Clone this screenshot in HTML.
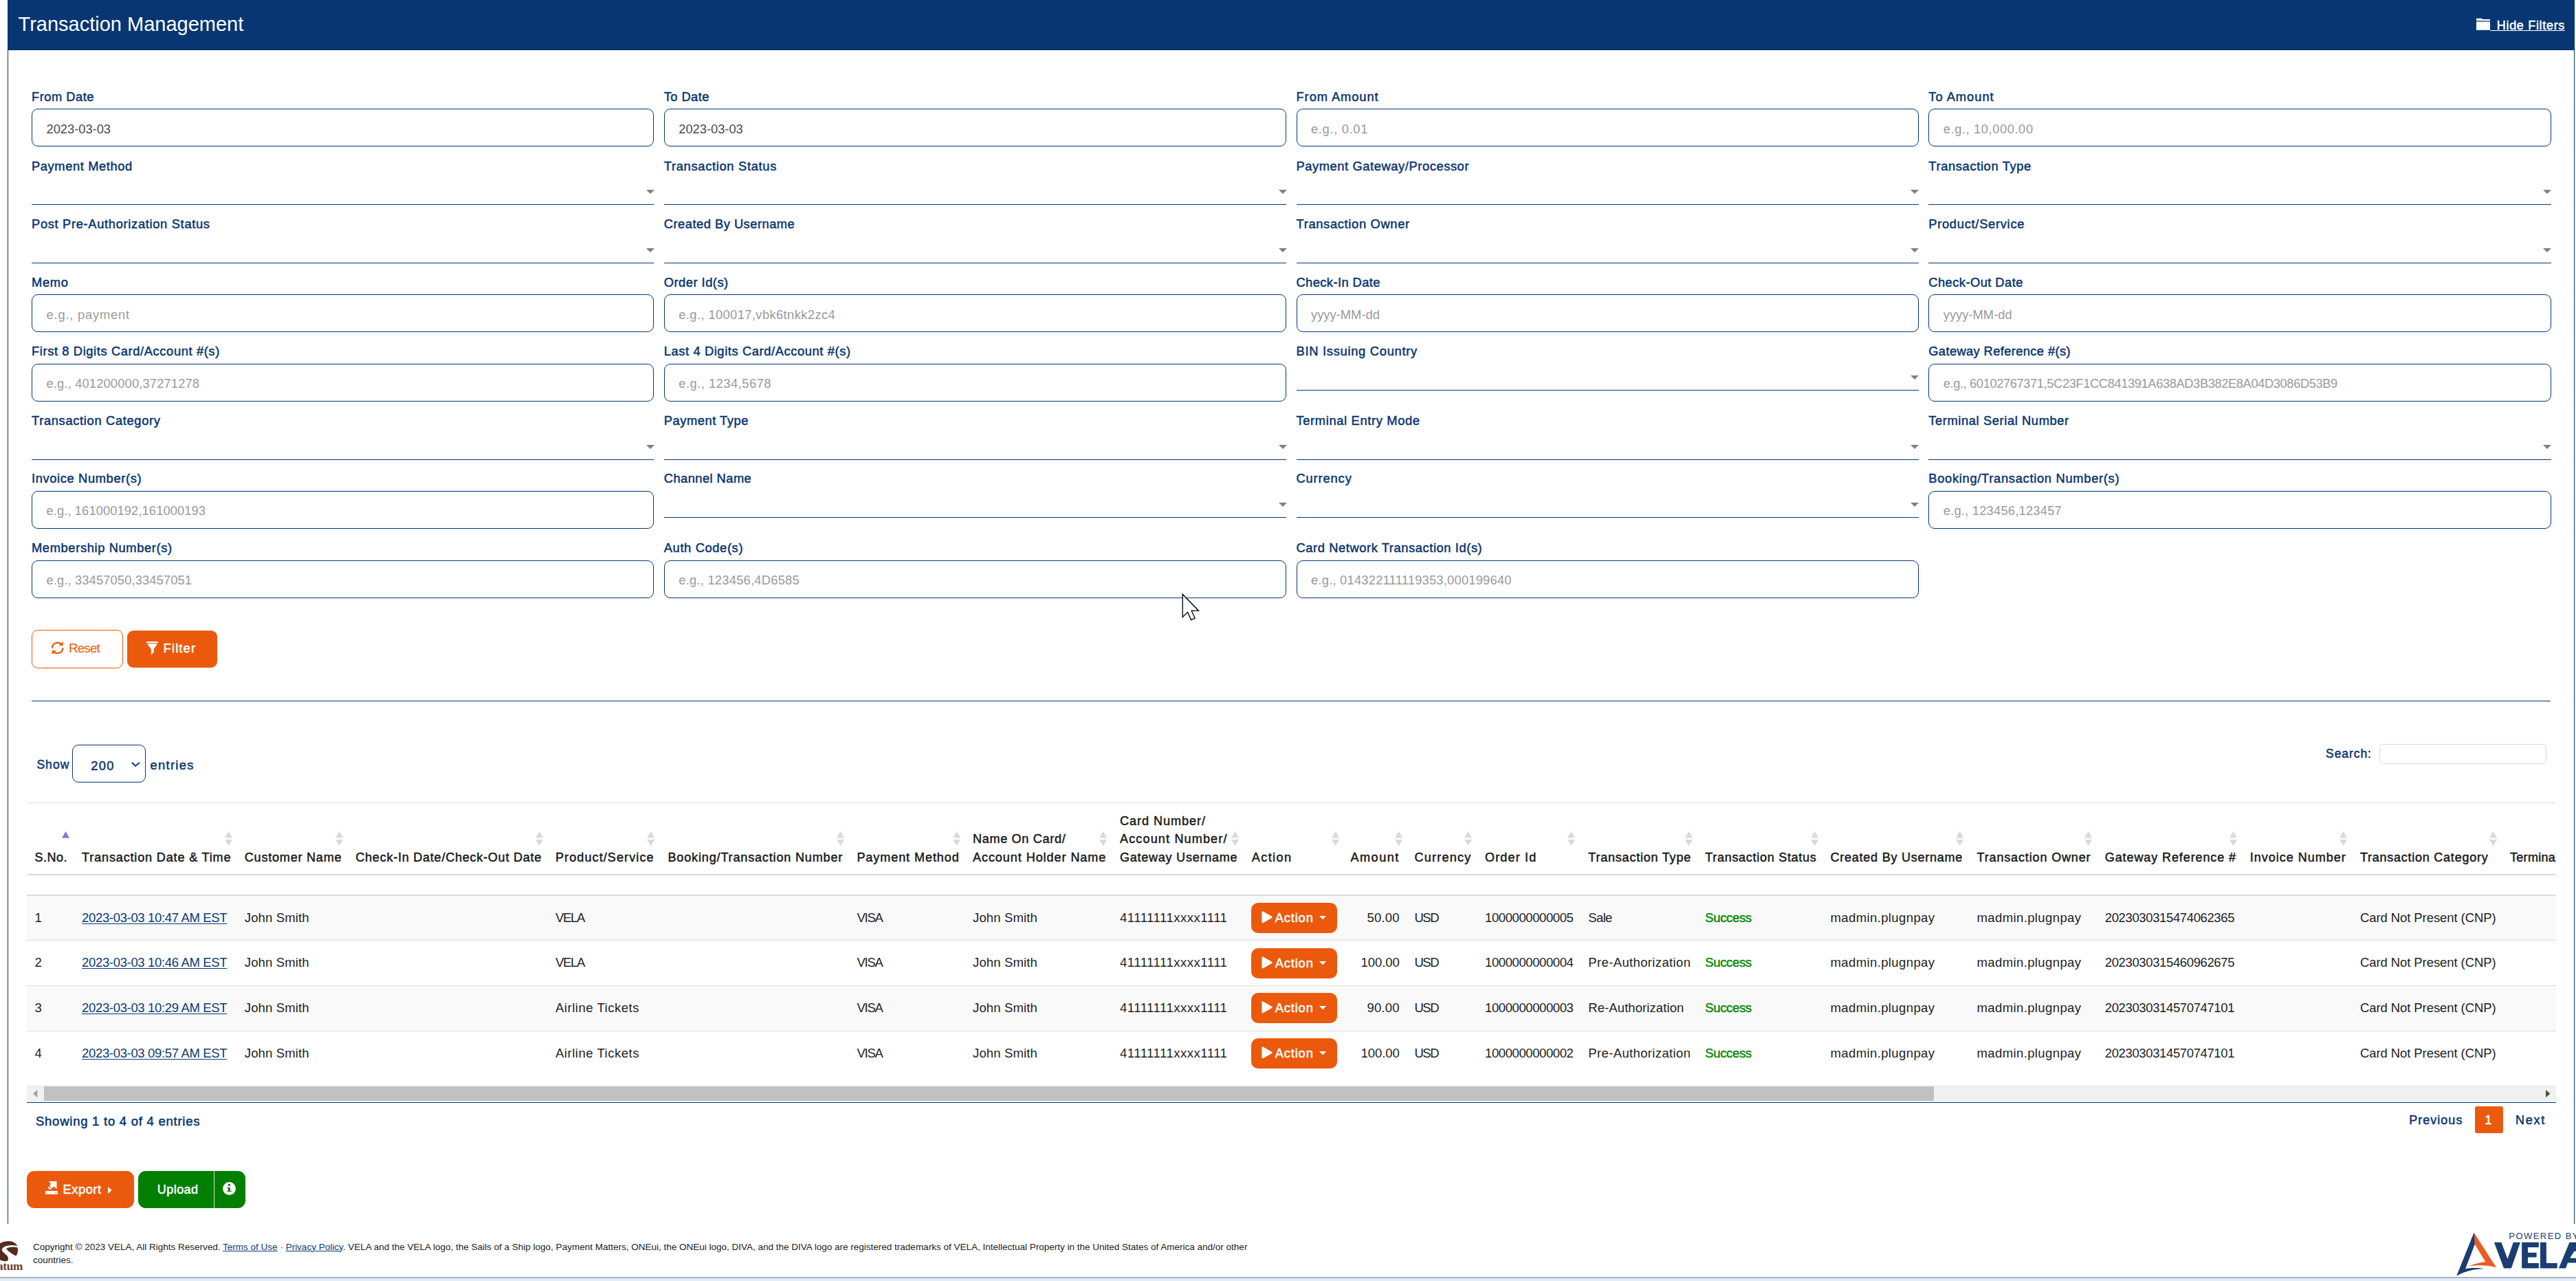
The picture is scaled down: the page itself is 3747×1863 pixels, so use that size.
<!DOCTYPE html>
<html><head><meta charset="utf-8"><title>Transaction Management</title>
<style>
html,body{margin:0;padding:0;}
body{width:3747px;height:1863px;position:relative;overflow:hidden;background:#fff;font-family:"Liberation Sans", sans-serif;}
.a{position:absolute;display:block;}
.t{position:absolute;white-space:nowrap;font-family:"Liberation Sans", sans-serif;}
svg{overflow:visible}
</style></head><body>
<div class="a" style="left:11px;top:0px;width:3734px;height:73px;background:#073673"></div>
<div class="a" style="left:11px;top:72px;width:3734px;height:1px;background:#02295f"></div>
<div class="t" style="left:26.5px;top:21px;font-size:29px;line-height:29px;font-weight:normal;color:#ffffff;">Transaction Management</div>
<svg class="a" style="left:3602px;top:26px" width="21" height="18" viewBox="0 0 21 18"><path d="M0 0.8 H8 L9 2 H20 V4.2 H0 Z M0 5.4 H20 V17.8 H0 Z" fill="#fff"/></svg>
<div class="t" style="right:16px;top:28px;font-size:18px;line-height:18px;font-weight:normal;color:#ffffff;letter-spacing:0.679px;-webkit-text-stroke:0.5px #ffffff;">Hide Filters</div>
<div class="a" style="left:3621.7px;top:44px;width:109.3px;height:1.2px;background:#fff"></div>
<div class="a" style="left:11px;top:73px;width:1px;height:1707px;background:#073672"></div>
<div class="a" style="left:3744.4px;top:73px;width:1px;height:1707px;background:#073672"></div>
<div class="t" style="left:46px;top:132px;font-size:18.3px;line-height:18.3px;font-weight:normal;color:#0a3670;letter-spacing:0.508px;-webkit-text-stroke:0.5px #0a3670;">From Date</div>
<div class="a" style="left:46px;top:158.3px;width:905.25px;height:55px;border:1px solid #073672;border-radius:9px;box-sizing:border-box;background:#fff"></div>
<div class="t" style="left:67.5px;top:178.8px;font-size:18.3px;line-height:18.3px;font-weight:normal;color:#4a4a4a;letter-spacing:-0.002px;">2023-03-03</div>
<div class="t" style="left:965.75px;top:132px;font-size:18.3px;line-height:18.3px;font-weight:normal;color:#0a3670;letter-spacing:0.445px;-webkit-text-stroke:0.5px #0a3670;">To Date</div>
<div class="a" style="left:965.75px;top:158.3px;width:905.25px;height:55px;border:1px solid #073672;border-radius:9px;box-sizing:border-box;background:#fff"></div>
<div class="t" style="left:987.25px;top:178.8px;font-size:18.3px;line-height:18.3px;font-weight:normal;color:#4a4a4a;letter-spacing:-0.002px;">2023-03-03</div>
<div class="t" style="left:1885.5px;top:132px;font-size:18.3px;line-height:18.3px;font-weight:normal;color:#0a3670;letter-spacing:0.942px;-webkit-text-stroke:0.5px #0a3670;">From Amount</div>
<div class="a" style="left:1885.5px;top:158.3px;width:905.25px;height:55px;border:1px solid #073672;border-radius:9px;box-sizing:border-box;background:#fff"></div>
<div class="t" style="left:1907px;top:178.8px;font-size:18.3px;line-height:18.3px;font-weight:normal;color:#9a9a9a;letter-spacing:0.674px;">e.g., 0.01</div>
<div class="t" style="left:2805.25px;top:132px;font-size:18.3px;line-height:18.3px;font-weight:normal;color:#0a3670;letter-spacing:1.006px;-webkit-text-stroke:0.5px #0a3670;">To Amount</div>
<div class="a" style="left:2805.25px;top:158.3px;width:905.25px;height:55px;border:1px solid #073672;border-radius:9px;box-sizing:border-box;background:#fff"></div>
<div class="t" style="left:2826.75px;top:178.8px;font-size:18.3px;line-height:18.3px;font-weight:normal;color:#9a9a9a;letter-spacing:0.594px;">e.g., 10,000.00</div>
<div class="t" style="left:46px;top:232.5px;font-size:18.3px;line-height:18.3px;font-weight:normal;color:#0a3670;letter-spacing:0.621px;-webkit-text-stroke:0.5px #0a3670;">Payment Method</div>
<div class="a" style="left:46px;top:297px;width:905.25px;height:1px;background:#073672"></div>
<svg class="a" style="left:939.75px;top:276px" width="12" height="6" viewBox="0 0 12 6"><path d="M0 0 H12 L6 6 Z" fill="#808080"/></svg>
<div class="t" style="left:965.75px;top:232.5px;font-size:18.3px;line-height:18.3px;font-weight:normal;color:#0a3670;letter-spacing:0.695px;-webkit-text-stroke:0.5px #0a3670;">Transaction Status</div>
<div class="a" style="left:965.75px;top:297px;width:905.25px;height:1px;background:#073672"></div>
<svg class="a" style="left:1859.5px;top:276px" width="12" height="6" viewBox="0 0 12 6"><path d="M0 0 H12 L6 6 Z" fill="#808080"/></svg>
<div class="t" style="left:1885.5px;top:232.5px;font-size:18.3px;line-height:18.3px;font-weight:normal;color:#0a3670;letter-spacing:0.593px;-webkit-text-stroke:0.5px #0a3670;">Payment Gateway/Processor</div>
<div class="a" style="left:1885.5px;top:297px;width:905.25px;height:1px;background:#073672"></div>
<svg class="a" style="left:2779.25px;top:276px" width="12" height="6" viewBox="0 0 12 6"><path d="M0 0 H12 L6 6 Z" fill="#808080"/></svg>
<div class="t" style="left:2805.25px;top:232.5px;font-size:18.3px;line-height:18.3px;font-weight:normal;color:#0a3670;letter-spacing:0.652px;-webkit-text-stroke:0.5px #0a3670;">Transaction Type</div>
<div class="a" style="left:2805.25px;top:297px;width:905.25px;height:1px;background:#073672"></div>
<svg class="a" style="left:3699px;top:276px" width="12" height="6" viewBox="0 0 12 6"><path d="M0 0 H12 L6 6 Z" fill="#808080"/></svg>
<div class="t" style="left:46px;top:317.3px;font-size:18.3px;line-height:18.3px;font-weight:normal;color:#0a3670;letter-spacing:0.685px;-webkit-text-stroke:0.5px #0a3670;">Post Pre-Authorization Status</div>
<div class="a" style="left:46px;top:382px;width:905.25px;height:1px;background:#073672"></div>
<svg class="a" style="left:939.75px;top:361px" width="12" height="6" viewBox="0 0 12 6"><path d="M0 0 H12 L6 6 Z" fill="#808080"/></svg>
<div class="t" style="left:965.75px;top:317.3px;font-size:18.3px;line-height:18.3px;font-weight:normal;color:#0a3670;letter-spacing:0.509px;-webkit-text-stroke:0.5px #0a3670;">Created By Username</div>
<div class="a" style="left:965.75px;top:382px;width:905.25px;height:1px;background:#073672"></div>
<svg class="a" style="left:1859.5px;top:361px" width="12" height="6" viewBox="0 0 12 6"><path d="M0 0 H12 L6 6 Z" fill="#808080"/></svg>
<div class="t" style="left:1885.5px;top:317.3px;font-size:18.3px;line-height:18.3px;font-weight:normal;color:#0a3670;letter-spacing:0.676px;-webkit-text-stroke:0.5px #0a3670;">Transaction Owner</div>
<div class="a" style="left:1885.5px;top:382px;width:905.25px;height:1px;background:#073672"></div>
<svg class="a" style="left:2779.25px;top:361px" width="12" height="6" viewBox="0 0 12 6"><path d="M0 0 H12 L6 6 Z" fill="#808080"/></svg>
<div class="t" style="left:2805.25px;top:317.3px;font-size:18.3px;line-height:18.3px;font-weight:normal;color:#0a3670;letter-spacing:0.725px;-webkit-text-stroke:0.5px #0a3670;">Product/Service</div>
<div class="a" style="left:2805.25px;top:382px;width:905.25px;height:1px;background:#073672"></div>
<svg class="a" style="left:3699px;top:361px" width="12" height="6" viewBox="0 0 12 6"><path d="M0 0 H12 L6 6 Z" fill="#808080"/></svg>
<div class="t" style="left:46px;top:402.1px;font-size:18.3px;line-height:18.3px;font-weight:normal;color:#0a3670;letter-spacing:0.677px;-webkit-text-stroke:0.5px #0a3670;">Memo</div>
<div class="a" style="left:46px;top:428.3px;width:905.25px;height:55px;border:1px solid #073672;border-radius:9px;box-sizing:border-box;background:#fff"></div>
<div class="t" style="left:67.5px;top:448.8px;font-size:18.3px;line-height:18.3px;font-weight:normal;color:#9a9a9a;letter-spacing:0.827px;">e.g., payment</div>
<div class="t" style="left:965.75px;top:402.1px;font-size:18.3px;line-height:18.3px;font-weight:normal;color:#0a3670;letter-spacing:0.508px;-webkit-text-stroke:0.5px #0a3670;">Order Id(s)</div>
<div class="a" style="left:965.75px;top:428.3px;width:905.25px;height:55px;border:1px solid #073672;border-radius:9px;box-sizing:border-box;background:#fff"></div>
<div class="t" style="left:987.25px;top:448.8px;font-size:18.3px;line-height:18.3px;font-weight:normal;color:#9a9a9a;letter-spacing:0.413px;">e.g., 100017,vbk6tnkk2zc4</div>
<div class="t" style="left:1885.5px;top:402.1px;font-size:18.3px;line-height:18.3px;font-weight:normal;color:#0a3670;letter-spacing:0.422px;-webkit-text-stroke:0.5px #0a3670;">Check-In Date</div>
<div class="a" style="left:1885.5px;top:428.3px;width:905.25px;height:55px;border:1px solid #073672;border-radius:9px;box-sizing:border-box;background:#fff"></div>
<div class="t" style="left:1907px;top:448.8px;font-size:18.3px;line-height:18.3px;font-weight:normal;color:#9a9a9a;letter-spacing:0.041px;">yyyy-MM-dd</div>
<div class="t" style="left:2805.25px;top:402.1px;font-size:18.3px;line-height:18.3px;font-weight:normal;color:#0a3670;letter-spacing:0.466px;-webkit-text-stroke:0.5px #0a3670;">Check-Out Date</div>
<div class="a" style="left:2805.25px;top:428.3px;width:905.25px;height:55px;border:1px solid #073672;border-radius:9px;box-sizing:border-box;background:#fff"></div>
<div class="t" style="left:2826.75px;top:448.8px;font-size:18.3px;line-height:18.3px;font-weight:normal;color:#9a9a9a;letter-spacing:0.041px;">yyyy-MM-dd</div>
<div class="t" style="left:46px;top:502px;font-size:18.3px;line-height:18.3px;font-weight:normal;color:#0a3670;letter-spacing:0.621px;-webkit-text-stroke:0.5px #0a3670;">First 8 Digits Card/Account #(s)</div>
<div class="a" style="left:46px;top:528.7px;width:905.25px;height:55px;border:1px solid #073672;border-radius:9px;box-sizing:border-box;background:#fff"></div>
<div class="t" style="left:67.5px;top:549.2px;font-size:18.3px;line-height:18.3px;font-weight:normal;color:#9a9a9a;letter-spacing:0.171px;">e.g., 401200000,37271278</div>
<div class="t" style="left:965.75px;top:502px;font-size:18.3px;line-height:18.3px;font-weight:normal;color:#0a3670;letter-spacing:0.608px;-webkit-text-stroke:0.5px #0a3670;">Last 4 Digits Card/Account #(s)</div>
<div class="a" style="left:965.75px;top:528.7px;width:905.25px;height:55px;border:1px solid #073672;border-radius:9px;box-sizing:border-box;background:#fff"></div>
<div class="t" style="left:987.25px;top:549.2px;font-size:18.3px;line-height:18.3px;font-weight:normal;color:#9a9a9a;letter-spacing:0.516px;">e.g., 1234,5678</div>
<div class="t" style="left:1885.5px;top:502px;font-size:18.3px;line-height:18.3px;font-weight:normal;color:#0a3670;letter-spacing:0.730px;-webkit-text-stroke:0.5px #0a3670;">BIN Issuing Country</div>
<div class="a" style="left:1885.5px;top:567px;width:905.25px;height:1px;background:#073672"></div>
<svg class="a" style="left:2779.25px;top:546px" width="12" height="6" viewBox="0 0 12 6"><path d="M0 0 H12 L6 6 Z" fill="#808080"/></svg>
<div class="t" style="left:2805.25px;top:502px;font-size:18.3px;line-height:18.3px;font-weight:normal;color:#0a3670;letter-spacing:0.388px;-webkit-text-stroke:0.5px #0a3670;">Gateway Reference #(s)</div>
<div class="a" style="left:2805.25px;top:528.7px;width:905.25px;height:55px;border:1px solid #073672;border-radius:9px;box-sizing:border-box;background:#fff"></div>
<div class="t" style="left:2826.75px;top:549.2px;font-size:18.3px;line-height:18.3px;font-weight:normal;color:#9a9a9a;letter-spacing:-0.388px;">e.g., 60102767371,5C23F1CC841391A638AD3B382E8A04D3086D53B9</div>
<div class="t" style="left:46px;top:603.2px;font-size:18.3px;line-height:18.3px;font-weight:normal;color:#0a3670;letter-spacing:0.676px;-webkit-text-stroke:0.5px #0a3670;">Transaction Category</div>
<div class="a" style="left:46px;top:668px;width:905.25px;height:1px;background:#073672"></div>
<svg class="a" style="left:939.75px;top:647px" width="12" height="6" viewBox="0 0 12 6"><path d="M0 0 H12 L6 6 Z" fill="#808080"/></svg>
<div class="t" style="left:965.75px;top:603.2px;font-size:18.3px;line-height:18.3px;font-weight:normal;color:#0a3670;letter-spacing:0.553px;-webkit-text-stroke:0.5px #0a3670;">Payment Type</div>
<div class="a" style="left:965.75px;top:668px;width:905.25px;height:1px;background:#073672"></div>
<svg class="a" style="left:1859.5px;top:647px" width="12" height="6" viewBox="0 0 12 6"><path d="M0 0 H12 L6 6 Z" fill="#808080"/></svg>
<div class="t" style="left:1885.5px;top:603.2px;font-size:18.3px;line-height:18.3px;font-weight:normal;color:#0a3670;letter-spacing:0.657px;-webkit-text-stroke:0.5px #0a3670;">Terminal Entry Mode</div>
<div class="a" style="left:1885.5px;top:668px;width:905.25px;height:1px;background:#073672"></div>
<svg class="a" style="left:2779.25px;top:647px" width="12" height="6" viewBox="0 0 12 6"><path d="M0 0 H12 L6 6 Z" fill="#808080"/></svg>
<div class="t" style="left:2805.25px;top:603.2px;font-size:18.3px;line-height:18.3px;font-weight:normal;color:#0a3670;letter-spacing:0.613px;-webkit-text-stroke:0.5px #0a3670;">Terminal Serial Number</div>
<div class="a" style="left:2805.25px;top:668px;width:905.25px;height:1px;background:#073672"></div>
<svg class="a" style="left:3699px;top:647px" width="12" height="6" viewBox="0 0 12 6"><path d="M0 0 H12 L6 6 Z" fill="#808080"/></svg>
<div class="t" style="left:46px;top:686.8px;font-size:18.3px;line-height:18.3px;font-weight:normal;color:#0a3670;letter-spacing:0.635px;-webkit-text-stroke:0.5px #0a3670;">Invoice Number(s)</div>
<div class="a" style="left:46px;top:713.7px;width:905.25px;height:55px;border:1px solid #073672;border-radius:9px;box-sizing:border-box;background:#fff"></div>
<div class="t" style="left:67.5px;top:734.2px;font-size:18.3px;line-height:18.3px;font-weight:normal;color:#9a9a9a;letter-spacing:0.115px;">e.g., 161000192,161000193</div>
<div class="t" style="left:965.75px;top:686.8px;font-size:18.3px;line-height:18.3px;font-weight:normal;color:#0a3670;letter-spacing:0.459px;-webkit-text-stroke:0.5px #0a3670;">Channel Name</div>
<div class="a" style="left:965.75px;top:752px;width:905.25px;height:1px;background:#073672"></div>
<svg class="a" style="left:1859.5px;top:731px" width="12" height="6" viewBox="0 0 12 6"><path d="M0 0 H12 L6 6 Z" fill="#808080"/></svg>
<div class="t" style="left:1885.5px;top:686.8px;font-size:18.3px;line-height:18.3px;font-weight:normal;color:#0a3670;letter-spacing:0.873px;-webkit-text-stroke:0.5px #0a3670;">Currency</div>
<div class="a" style="left:1885.5px;top:752px;width:905.25px;height:1px;background:#073672"></div>
<svg class="a" style="left:2779.25px;top:731px" width="12" height="6" viewBox="0 0 12 6"><path d="M0 0 H12 L6 6 Z" fill="#808080"/></svg>
<div class="t" style="left:2805.25px;top:686.8px;font-size:18.3px;line-height:18.3px;font-weight:normal;color:#0a3670;letter-spacing:0.711px;-webkit-text-stroke:0.5px #0a3670;">Booking/Transaction Number(s)</div>
<div class="a" style="left:2805.25px;top:713.7px;width:905.25px;height:55px;border:1px solid #073672;border-radius:9px;box-sizing:border-box;background:#fff"></div>
<div class="t" style="left:2826.75px;top:734.2px;font-size:18.3px;line-height:18.3px;font-weight:normal;color:#9a9a9a;letter-spacing:0.236px;">e.g., 123456,123457</div>
<div class="t" style="left:46px;top:788.4px;font-size:18.3px;line-height:18.3px;font-weight:normal;color:#0a3670;letter-spacing:0.641px;-webkit-text-stroke:0.5px #0a3670;">Membership Number(s)</div>
<div class="a" style="left:46px;top:814.7px;width:905.25px;height:55px;border:1px solid #073672;border-radius:9px;box-sizing:border-box;background:#fff"></div>
<div class="t" style="left:67.5px;top:835.2px;font-size:18.3px;line-height:18.3px;font-weight:normal;color:#9a9a9a;letter-spacing:0.141px;">e.g., 33457050,33457051</div>
<div class="t" style="left:965.75px;top:788.4px;font-size:18.3px;line-height:18.3px;font-weight:normal;color:#0a3670;letter-spacing:0.639px;-webkit-text-stroke:0.5px #0a3670;">Auth Code(s)</div>
<div class="a" style="left:965.75px;top:814.7px;width:905.25px;height:55px;border:1px solid #073672;border-radius:9px;box-sizing:border-box;background:#fff"></div>
<div class="t" style="left:987.25px;top:835.2px;font-size:18.3px;line-height:18.3px;font-weight:normal;color:#9a9a9a;letter-spacing:0.257px;">e.g., 123456,4D6585</div>
<div class="t" style="left:1885.5px;top:788.4px;font-size:18.3px;line-height:18.3px;font-weight:normal;color:#0a3670;letter-spacing:0.594px;-webkit-text-stroke:0.5px #0a3670;">Card Network Transaction Id(s)</div>
<div class="a" style="left:1885.5px;top:814.7px;width:905.25px;height:55px;border:1px solid #073672;border-radius:9px;box-sizing:border-box;background:#fff"></div>
<div class="t" style="left:1907px;top:835.2px;font-size:18.3px;line-height:18.3px;font-weight:normal;color:#9a9a9a;letter-spacing:0.240px;">e.g., 014322111119353,000199640</div>
<div class="a" style="left:46.4px;top:916.3px;width:132.4px;height:55.3px;border:1px solid #eb5a0c;border-radius:9px;box-sizing:border-box"></div>
<svg class="a" style="left:70px;top:928px" width="28" height="28" viewBox="0 0 28 28"><g fill="none" stroke="#eb5a0c" stroke-width="2.3"><path d="M5.9 14.6 A7.75 7.75 0 0 1 18.6 8.5"/><path d="M21.3 14.2 A7.75 7.75 0 0 1 8.6 20.3"/></g><path d="M21.7 5 V10.8 H15.6 Z M5.8 18 H11.9 L5.8 23.9 Z" fill="#eb5a0c"/></svg>
<div class="t" style="left:99.9px;top:933.8px;font-size:18.8px;line-height:18.8px;font-weight:normal;color:#eb5a0c;letter-spacing:-0.791px;">Reset</div>
<div class="a" style="left:185px;top:917px;width:130.7px;height:54px;background:#eb5a0c;border-radius:9px"></div>
<svg class="a" style="left:208px;top:928px" width="28" height="28" viewBox="0 0 28 28"><path d="M5 4.9 H21.9 V6.9 H5 Z M5.9 8.1 H21 L15.7 16.2 V20.5 L12.4 24 Q11.9 24.2 11.9 23.5 V16.2 Z" fill="#fff"/></svg>
<div class="t" style="left:237.5px;top:933.8px;font-size:18.5px;line-height:18.5px;font-weight:normal;color:#fff;letter-spacing:1.115px;-webkit-text-stroke:0.5px #fff;">Filter</div>
<div class="a" style="left:46px;top:1019px;width:3664px;height:1px;background:#073672"></div>
<div class="t" style="left:53.4px;top:1104.3px;font-size:17.5px;line-height:17.5px;font-weight:normal;color:#0a3670;letter-spacing:1.040px;-webkit-text-stroke:0.5px #0a3670;">Show</div>
<div class="a" style="left:105.4px;top:1083.4px;width:106.9px;height:55.1px;border:1px solid #073672;border-radius:9px;box-sizing:border-box"></div>
<div class="t" style="left:132.3px;top:1104.7px;font-size:18.3px;line-height:18.3px;font-weight:normal;color:#0a3670;letter-spacing:1.342px;-webkit-text-stroke:0.5px #0a3670;">200</div>
<svg class="a" style="left:191px;top:1108px" width="13" height="8" viewBox="0 0 13 8"><path d="M0.8 1 L6.1 6 L12 1" fill="none" stroke="#0a3670" stroke-width="2"/></svg>
<div class="t" style="left:218.5px;top:1104.3px;font-size:18.3px;line-height:18.3px;font-weight:normal;color:#0a3670;letter-spacing:1.337px;-webkit-text-stroke:0.5px #0a3670;">entries</div>
<div class="t" style="right:297.2px;top:1087.8px;font-size:17.5px;line-height:17.5px;font-weight:normal;color:#0a3670;letter-spacing:0.915px;-webkit-text-stroke:0.5px #0a3670;">Search:</div>
<div class="a" style="left:3461.4px;top:1081.5px;width:242.3px;height:29.8px;border:1px solid #d9d9d9;border-radius:5px;box-sizing:border-box"></div>
<div class="a" style="left:39px;top:1167px;width:3679px;height:1px;background:#dddddd"></div>
<div class="a" style="left:39px;top:1271px;width:3679px;height:2px;background:#dddddd"></div>
<div class="a" style="left:39px;top:1301px;width:3679px;height:2px;background:#dddddd"></div>
<div class="a" style="left:39px;top:1303px;width:3679px;height:64px;background:#f9f9f9"></div>
<div class="a" style="left:39px;top:1367px;width:3679px;height:1px;background:#dddddd"></div>
<div class="a" style="left:39px;top:1433px;width:3679px;height:1px;background:#dddddd"></div>
<div class="a" style="left:39px;top:1434px;width:3679px;height:65px;background:#f9f9f9"></div>
<div class="a" style="left:39px;top:1499px;width:3679px;height:1px;background:#dddddd"></div>
<div class="t" style="left:50.5px;top:1238.3px;font-size:18px;line-height:18px;font-weight:normal;color:#1a1a1a;letter-spacing:0.467px;-webkit-text-stroke:0.5px #1a1a1a;">S.No.</div>
<div class="t" style="left:119.1px;top:1238.3px;font-size:18px;line-height:18px;font-weight:normal;color:#1a1a1a;letter-spacing:0.863px;-webkit-text-stroke:0.5px #1a1a1a;">Transaction Date &amp; Time</div>
<div class="t" style="left:355.8px;top:1238.3px;font-size:18px;line-height:18px;font-weight:normal;color:#1a1a1a;letter-spacing:0.804px;-webkit-text-stroke:0.5px #1a1a1a;">Customer Name</div>
<div class="t" style="left:517.3px;top:1238.3px;font-size:18px;line-height:18px;font-weight:normal;color:#1a1a1a;letter-spacing:0.774px;-webkit-text-stroke:0.5px #1a1a1a;">Check-In Date/Check-Out Date</div>
<div class="t" style="left:808px;top:1238.3px;font-size:18px;line-height:18px;font-weight:normal;color:#1a1a1a;letter-spacing:1.103px;-webkit-text-stroke:0.5px #1a1a1a;">Product/Service</div>
<div class="t" style="left:971.5px;top:1238.3px;font-size:18px;line-height:18px;font-weight:normal;color:#1a1a1a;letter-spacing:0.854px;-webkit-text-stroke:0.5px #1a1a1a;">Booking/Transaction Number</div>
<div class="t" style="left:1246.4px;top:1238.3px;font-size:18px;line-height:18px;font-weight:normal;color:#1a1a1a;letter-spacing:0.948px;-webkit-text-stroke:0.5px #1a1a1a;">Payment Method</div>
<div class="t" style="left:1415px;top:1211.4px;font-size:18px;line-height:18px;font-weight:normal;color:#1a1a1a;letter-spacing:0.721px;-webkit-text-stroke:0.5px #1a1a1a;">Name On Card/</div>
<div class="t" style="left:1415px;top:1238.3px;font-size:18px;line-height:18px;font-weight:normal;color:#1a1a1a;letter-spacing:0.956px;-webkit-text-stroke:0.5px #1a1a1a;">Account Holder Name</div>
<div class="t" style="left:1629px;top:1184.5px;font-size:18px;line-height:18px;font-weight:normal;color:#1a1a1a;letter-spacing:1.005px;-webkit-text-stroke:0.5px #1a1a1a;">Card Number/</div>
<div class="t" style="left:1629px;top:1211.4px;font-size:18px;line-height:18px;font-weight:normal;color:#1a1a1a;letter-spacing:1.167px;-webkit-text-stroke:0.5px #1a1a1a;">Account Number/</div>
<div class="t" style="left:1629px;top:1238.3px;font-size:18px;line-height:18px;font-weight:normal;color:#1a1a1a;letter-spacing:0.761px;-webkit-text-stroke:0.5px #1a1a1a;">Gateway Username</div>
<div class="t" style="left:1820.7px;top:1238.3px;font-size:18px;line-height:18px;font-weight:normal;color:#1a1a1a;letter-spacing:1.474px;-webkit-text-stroke:0.5px #1a1a1a;">Action</div>
<div class="t" style="right:1711.3px;top:1238.3px;font-size:18px;line-height:18px;font-weight:normal;color:#1a1a1a;letter-spacing:1.511px;-webkit-text-stroke:0.5px #1a1a1a;">Amount</div>
<div class="t" style="left:2057.5px;top:1238.3px;font-size:18px;line-height:18px;font-weight:normal;color:#1a1a1a;letter-spacing:1.238px;-webkit-text-stroke:0.5px #1a1a1a;">Currency</div>
<div class="t" style="left:2160px;top:1238.3px;font-size:18px;line-height:18px;font-weight:normal;color:#1a1a1a;letter-spacing:1.167px;-webkit-text-stroke:0.5px #1a1a1a;">Order Id</div>
<div class="t" style="left:2310.3px;top:1238.3px;font-size:18px;line-height:18px;font-weight:normal;color:#1a1a1a;letter-spacing:0.788px;-webkit-text-stroke:0.5px #1a1a1a;">Transaction Type</div>
<div class="t" style="left:2480.2px;top:1238.3px;font-size:18px;line-height:18px;font-weight:normal;color:#1a1a1a;letter-spacing:0.717px;-webkit-text-stroke:0.5px #1a1a1a;">Transaction Status</div>
<div class="t" style="left:2662.5px;top:1238.3px;font-size:18px;line-height:18px;font-weight:normal;color:#1a1a1a;letter-spacing:0.762px;-webkit-text-stroke:0.5px #1a1a1a;">Created By Username</div>
<div class="t" style="left:2875.5px;top:1238.3px;font-size:18px;line-height:18px;font-weight:normal;color:#1a1a1a;letter-spacing:0.856px;-webkit-text-stroke:0.5px #1a1a1a;">Transaction Owner</div>
<div class="t" style="left:3061.8px;top:1238.3px;font-size:18px;line-height:18px;font-weight:normal;color:#1a1a1a;letter-spacing:0.900px;-webkit-text-stroke:0.5px #1a1a1a;">Gateway Reference #</div>
<div class="t" style="left:3272.7px;top:1238.3px;font-size:18px;line-height:18px;font-weight:normal;color:#1a1a1a;letter-spacing:0.995px;-webkit-text-stroke:0.5px #1a1a1a;">Invoice Number</div>
<div class="t" style="left:3432.9px;top:1238.3px;font-size:18px;line-height:18px;font-weight:normal;color:#1a1a1a;letter-spacing:0.757px;-webkit-text-stroke:0.5px #1a1a1a;">Transaction Category</div>
<div class="a" style="left:3650px;top:1230px;width:68px;height:32px;overflow:hidden"><div class="t" style="left:1px;top:8.3px;font-size:18px;line-height:18px;font-weight:normal;-webkit-text-stroke:0.5px #1a1a1a;color:#1a1a1a;letter-spacing:0.3px">Terminal Entry Mode</div></div>
<svg class="a" style="left:326.6px;top:1209.4px" width="11.2" height="21" viewBox="0 0 11.2 21"><path d="M5.6 0 L11.2 9.4 H0 Z M0 11.9 H11.2 L5.6 21 Z" fill="#d9d9d9"/></svg>
<svg class="a" style="left:487.5px;top:1209.4px" width="11.2" height="21" viewBox="0 0 11.2 21"><path d="M5.6 0 L11.2 9.4 H0 Z M0 11.9 H11.2 L5.6 21 Z" fill="#d9d9d9"/></svg>
<svg class="a" style="left:778.7px;top:1209.4px" width="11.2" height="21" viewBox="0 0 11.2 21"><path d="M5.6 0 L11.2 9.4 H0 Z M0 11.9 H11.2 L5.6 21 Z" fill="#d9d9d9"/></svg>
<svg class="a" style="left:941px;top:1209.4px" width="11.2" height="21" viewBox="0 0 11.2 21"><path d="M5.6 0 L11.2 9.4 H0 Z M0 11.9 H11.2 L5.6 21 Z" fill="#d9d9d9"/></svg>
<svg class="a" style="left:1216.7px;top:1209.4px" width="11.2" height="21" viewBox="0 0 11.2 21"><path d="M5.6 0 L11.2 9.4 H0 Z M0 11.9 H11.2 L5.6 21 Z" fill="#d9d9d9"/></svg>
<svg class="a" style="left:1385.7px;top:1209.4px" width="11.2" height="21" viewBox="0 0 11.2 21"><path d="M5.6 0 L11.2 9.4 H0 Z M0 11.9 H11.2 L5.6 21 Z" fill="#d9d9d9"/></svg>
<svg class="a" style="left:1598.7px;top:1209.4px" width="11.2" height="21" viewBox="0 0 11.2 21"><path d="M5.6 0 L11.2 9.4 H0 Z M0 11.9 H11.2 L5.6 21 Z" fill="#d9d9d9"/></svg>
<svg class="a" style="left:1790.5px;top:1209.4px" width="11.2" height="21" viewBox="0 0 11.2 21"><path d="M5.6 0 L11.2 9.4 H0 Z M0 11.9 H11.2 L5.6 21 Z" fill="#d9d9d9"/></svg>
<svg class="a" style="left:1936.8px;top:1209.4px" width="11.2" height="21" viewBox="0 0 11.2 21"><path d="M5.6 0 L11.2 9.4 H0 Z M0 11.9 H11.2 L5.6 21 Z" fill="#d9d9d9"/></svg>
<svg class="a" style="left:2029px;top:1209.4px" width="11.2" height="21" viewBox="0 0 11.2 21"><path d="M5.6 0 L11.2 9.4 H0 Z M0 11.9 H11.2 L5.6 21 Z" fill="#d9d9d9"/></svg>
<svg class="a" style="left:2130px;top:1209.4px" width="11.2" height="21" viewBox="0 0 11.2 21"><path d="M5.6 0 L11.2 9.4 H0 Z M0 11.9 H11.2 L5.6 21 Z" fill="#d9d9d9"/></svg>
<svg class="a" style="left:2280px;top:1209.4px" width="11.2" height="21" viewBox="0 0 11.2 21"><path d="M5.6 0 L11.2 9.4 H0 Z M0 11.9 H11.2 L5.6 21 Z" fill="#d9d9d9"/></svg>
<svg class="a" style="left:2450.6px;top:1209.4px" width="11.2" height="21" viewBox="0 0 11.2 21"><path d="M5.6 0 L11.2 9.4 H0 Z M0 11.9 H11.2 L5.6 21 Z" fill="#d9d9d9"/></svg>
<svg class="a" style="left:2633.8px;top:1209.4px" width="11.2" height="21" viewBox="0 0 11.2 21"><path d="M5.6 0 L11.2 9.4 H0 Z M0 11.9 H11.2 L5.6 21 Z" fill="#d9d9d9"/></svg>
<svg class="a" style="left:2845px;top:1209.4px" width="11.2" height="21" viewBox="0 0 11.2 21"><path d="M5.6 0 L11.2 9.4 H0 Z M0 11.9 H11.2 L5.6 21 Z" fill="#d9d9d9"/></svg>
<svg class="a" style="left:3031.5px;top:1209.4px" width="11.2" height="21" viewBox="0 0 11.2 21"><path d="M5.6 0 L11.2 9.4 H0 Z M0 11.9 H11.2 L5.6 21 Z" fill="#d9d9d9"/></svg>
<svg class="a" style="left:3243px;top:1209.4px" width="11.2" height="21" viewBox="0 0 11.2 21"><path d="M5.6 0 L11.2 9.4 H0 Z M0 11.9 H11.2 L5.6 21 Z" fill="#d9d9d9"/></svg>
<svg class="a" style="left:3403px;top:1209.4px" width="11.2" height="21" viewBox="0 0 11.2 21"><path d="M5.6 0 L11.2 9.4 H0 Z M0 11.9 H11.2 L5.6 21 Z" fill="#d9d9d9"/></svg>
<svg class="a" style="left:3620.7px;top:1209.4px" width="11.2" height="21" viewBox="0 0 11.2 21"><path d="M5.6 0 L11.2 9.4 H0 Z M0 11.9 H11.2 L5.6 21 Z" fill="#d9d9d9"/></svg>
<svg class="a" style="left:90.3px;top:1209.4px" width="11" height="10" viewBox="0 0 11 10"><path d="M5.5 0 L11 9.8 H0 Z" fill="#7b80dd"/></svg>
<div class="t" style="left:50.5px;top:1325.7px;font-size:18.5px;line-height:18.5px;font-weight:normal;color:#1e1e1e;">1</div>
<div class="t" style="left:119.1px;top:1325.7px;font-size:18.5px;line-height:18.5px;font-weight:normal;color:#0b3a75;letter-spacing:-0.344px;text-decoration:underline;text-underline-offset:2px">2023-03-03 10:47 AM EST</div>
<div class="t" style="left:355.8px;top:1325.7px;font-size:18.5px;line-height:18.5px;font-weight:normal;color:#1e1e1e;letter-spacing:0.139px;">John Smith</div>
<div class="t" style="left:808px;top:1325.7px;font-size:18.5px;line-height:18.5px;font-weight:normal;color:#1e1e1e;letter-spacing:-1.338px;">VELA</div>
<div class="t" style="left:1246.4px;top:1325.7px;font-size:18.5px;line-height:18.5px;font-weight:normal;color:#1e1e1e;letter-spacing:-1.224px;">VISA</div>
<div class="t" style="left:1415px;top:1325.7px;font-size:18.5px;line-height:18.5px;font-weight:normal;color:#1e1e1e;letter-spacing:0.139px;">John Smith</div>
<div class="t" style="left:1629px;top:1325.7px;font-size:18.5px;line-height:18.5px;font-weight:normal;color:#1e1e1e;letter-spacing:0.519px;">41111111xxxx1111</div>
<div class="a" style="left:1820px;top:1313px;width:125px;height:44px;background:#eb5a0c;border-radius:10px"></div>
<svg class="a" style="left:1830px;top:1320px" width="30" height="30" viewBox="0 0 30 30"><path d="M6.6 6.6 V21.1 L19.4 13.85 Z" fill="#fff" stroke="#fff" stroke-width="2.4" stroke-linejoin="round"/></svg>
<div class="t" style="left:1854.8px;top:1326px;font-size:18.3px;line-height:18.3px;font-weight:normal;color:#fff;letter-spacing:0.838px;-webkit-text-stroke:0.5px #fff;">Action</div>
<svg class="a" style="left:1918.9px;top:1332px" width="10" height="5.2" viewBox="0 0 10 5.2"><path d="M0 0 H10 L5 5.2 Z" fill="#fff"/></svg>
<div class="t" style="right:1711.3px;top:1325.7px;font-size:18.5px;line-height:18.5px;font-weight:normal;color:#1e1e1e;letter-spacing:0.176px;">50.00</div>
<div class="t" style="left:2057.5px;top:1325.7px;font-size:18.5px;line-height:18.5px;font-weight:normal;color:#1e1e1e;letter-spacing:-1.531px;">USD</div>
<div class="t" style="left:2160px;top:1325.7px;font-size:18.5px;line-height:18.5px;font-weight:normal;color:#1e1e1e;letter-spacing:-0.405px;">1000000000005</div>
<div class="t" style="left:2310.3px;top:1325.7px;font-size:18.5px;line-height:18.5px;font-weight:normal;color:#1e1e1e;letter-spacing:-0.644px;">Sale</div>
<div class="t" style="left:2480.2px;top:1325.7px;font-size:18.5px;line-height:18.5px;font-weight:normal;color:#0a8a0a;letter-spacing:-0.337px;-webkit-text-stroke:0.5px #0a8a0a;">Success</div>
<div class="t" style="left:2662.5px;top:1325.7px;font-size:18.5px;line-height:18.5px;font-weight:normal;color:#1e1e1e;letter-spacing:0.391px;">madmin.plugnpay</div>
<div class="t" style="left:2875.5px;top:1325.7px;font-size:18.5px;line-height:18.5px;font-weight:normal;color:#1e1e1e;letter-spacing:0.391px;">madmin.plugnpay</div>
<div class="t" style="left:3061.8px;top:1325.7px;font-size:18.5px;line-height:18.5px;font-weight:normal;color:#1e1e1e;letter-spacing:-0.378px;">2023030315474062365</div>
<div class="t" style="left:3432.9px;top:1325.7px;font-size:18.5px;line-height:18.5px;font-weight:normal;color:#1e1e1e;letter-spacing:-0.079px;">Card Not Present (CNP)</div>
<div class="t" style="left:50.5px;top:1391.4px;font-size:18.5px;line-height:18.5px;font-weight:normal;color:#1e1e1e;">2</div>
<div class="t" style="left:119.1px;top:1391.4px;font-size:18.5px;line-height:18.5px;font-weight:normal;color:#0b3a75;letter-spacing:-0.344px;text-decoration:underline;text-underline-offset:2px">2023-03-03 10:46 AM EST</div>
<div class="t" style="left:355.8px;top:1391.4px;font-size:18.5px;line-height:18.5px;font-weight:normal;color:#1e1e1e;letter-spacing:0.139px;">John Smith</div>
<div class="t" style="left:808px;top:1391.4px;font-size:18.5px;line-height:18.5px;font-weight:normal;color:#1e1e1e;letter-spacing:-1.338px;">VELA</div>
<div class="t" style="left:1246.4px;top:1391.4px;font-size:18.5px;line-height:18.5px;font-weight:normal;color:#1e1e1e;letter-spacing:-1.224px;">VISA</div>
<div class="t" style="left:1415px;top:1391.4px;font-size:18.5px;line-height:18.5px;font-weight:normal;color:#1e1e1e;letter-spacing:0.139px;">John Smith</div>
<div class="t" style="left:1629px;top:1391.4px;font-size:18.5px;line-height:18.5px;font-weight:normal;color:#1e1e1e;letter-spacing:0.519px;">41111111xxxx1111</div>
<div class="a" style="left:1820px;top:1378.7px;width:125px;height:44px;background:#eb5a0c;border-radius:10px"></div>
<svg class="a" style="left:1830px;top:1385.7px" width="30" height="30" viewBox="0 0 30 30"><path d="M6.6 6.6 V21.1 L19.4 13.85 Z" fill="#fff" stroke="#fff" stroke-width="2.4" stroke-linejoin="round"/></svg>
<div class="t" style="left:1854.8px;top:1391.7px;font-size:18.3px;line-height:18.3px;font-weight:normal;color:#fff;letter-spacing:0.838px;-webkit-text-stroke:0.5px #fff;">Action</div>
<svg class="a" style="left:1918.9px;top:1397.7px" width="10" height="5.2" viewBox="0 0 10 5.2"><path d="M0 0 H10 L5 5.2 Z" fill="#fff"/></svg>
<div class="t" style="right:1711.3px;top:1391.4px;font-size:18.5px;line-height:18.5px;font-weight:normal;color:#1e1e1e;letter-spacing:-0.079px;">100.00</div>
<div class="t" style="left:2057.5px;top:1391.4px;font-size:18.5px;line-height:18.5px;font-weight:normal;color:#1e1e1e;letter-spacing:-1.531px;">USD</div>
<div class="t" style="left:2160px;top:1391.4px;font-size:18.5px;line-height:18.5px;font-weight:normal;color:#1e1e1e;letter-spacing:-0.405px;">1000000000004</div>
<div class="t" style="left:2310.3px;top:1391.4px;font-size:18.5px;line-height:18.5px;font-weight:normal;color:#1e1e1e;letter-spacing:0.360px;">Pre-Authorization</div>
<div class="t" style="left:2480.2px;top:1391.4px;font-size:18.5px;line-height:18.5px;font-weight:normal;color:#0a8a0a;letter-spacing:-0.337px;-webkit-text-stroke:0.5px #0a8a0a;">Success</div>
<div class="t" style="left:2662.5px;top:1391.4px;font-size:18.5px;line-height:18.5px;font-weight:normal;color:#1e1e1e;letter-spacing:0.391px;">madmin.plugnpay</div>
<div class="t" style="left:2875.5px;top:1391.4px;font-size:18.5px;line-height:18.5px;font-weight:normal;color:#1e1e1e;letter-spacing:0.391px;">madmin.plugnpay</div>
<div class="t" style="left:3061.8px;top:1391.4px;font-size:18.5px;line-height:18.5px;font-weight:normal;color:#1e1e1e;letter-spacing:-0.378px;">2023030315460962675</div>
<div class="t" style="left:3432.9px;top:1391.4px;font-size:18.5px;line-height:18.5px;font-weight:normal;color:#1e1e1e;letter-spacing:-0.079px;">Card Not Present (CNP)</div>
<div class="t" style="left:50.5px;top:1457.1px;font-size:18.5px;line-height:18.5px;font-weight:normal;color:#1e1e1e;">3</div>
<div class="t" style="left:119.1px;top:1457.1px;font-size:18.5px;line-height:18.5px;font-weight:normal;color:#0b3a75;letter-spacing:-0.344px;text-decoration:underline;text-underline-offset:2px">2023-03-03 10:29 AM EST</div>
<div class="t" style="left:355.8px;top:1457.1px;font-size:18.5px;line-height:18.5px;font-weight:normal;color:#1e1e1e;letter-spacing:0.139px;">John Smith</div>
<div class="t" style="left:808px;top:1457.1px;font-size:18.5px;line-height:18.5px;font-weight:normal;color:#1e1e1e;letter-spacing:0.527px;">Airline Tickets</div>
<div class="t" style="left:1246.4px;top:1457.1px;font-size:18.5px;line-height:18.5px;font-weight:normal;color:#1e1e1e;letter-spacing:-1.224px;">VISA</div>
<div class="t" style="left:1415px;top:1457.1px;font-size:18.5px;line-height:18.5px;font-weight:normal;color:#1e1e1e;letter-spacing:0.139px;">John Smith</div>
<div class="t" style="left:1629px;top:1457.1px;font-size:18.5px;line-height:18.5px;font-weight:normal;color:#1e1e1e;letter-spacing:0.519px;">41111111xxxx1111</div>
<div class="a" style="left:1820px;top:1444.4px;width:125px;height:44px;background:#eb5a0c;border-radius:10px"></div>
<svg class="a" style="left:1830px;top:1451.4px" width="30" height="30" viewBox="0 0 30 30"><path d="M6.6 6.6 V21.1 L19.4 13.85 Z" fill="#fff" stroke="#fff" stroke-width="2.4" stroke-linejoin="round"/></svg>
<div class="t" style="left:1854.8px;top:1457.4px;font-size:18.3px;line-height:18.3px;font-weight:normal;color:#fff;letter-spacing:0.838px;-webkit-text-stroke:0.5px #fff;">Action</div>
<svg class="a" style="left:1918.9px;top:1463.4px" width="10" height="5.2" viewBox="0 0 10 5.2"><path d="M0 0 H10 L5 5.2 Z" fill="#fff"/></svg>
<div class="t" style="right:1711.3px;top:1457.1px;font-size:18.5px;line-height:18.5px;font-weight:normal;color:#1e1e1e;letter-spacing:0.176px;">90.00</div>
<div class="t" style="left:2057.5px;top:1457.1px;font-size:18.5px;line-height:18.5px;font-weight:normal;color:#1e1e1e;letter-spacing:-1.531px;">USD</div>
<div class="t" style="left:2160px;top:1457.1px;font-size:18.5px;line-height:18.5px;font-weight:normal;color:#1e1e1e;letter-spacing:-0.405px;">1000000000003</div>
<div class="t" style="left:2310.3px;top:1457.1px;font-size:18.5px;line-height:18.5px;font-weight:normal;color:#1e1e1e;letter-spacing:0.080px;">Re-Authorization</div>
<div class="t" style="left:2480.2px;top:1457.1px;font-size:18.5px;line-height:18.5px;font-weight:normal;color:#0a8a0a;letter-spacing:-0.337px;-webkit-text-stroke:0.5px #0a8a0a;">Success</div>
<div class="t" style="left:2662.5px;top:1457.1px;font-size:18.5px;line-height:18.5px;font-weight:normal;color:#1e1e1e;letter-spacing:0.391px;">madmin.plugnpay</div>
<div class="t" style="left:2875.5px;top:1457.1px;font-size:18.5px;line-height:18.5px;font-weight:normal;color:#1e1e1e;letter-spacing:0.391px;">madmin.plugnpay</div>
<div class="t" style="left:3061.8px;top:1457.1px;font-size:18.5px;line-height:18.5px;font-weight:normal;color:#1e1e1e;letter-spacing:-0.378px;">2023030314570747101</div>
<div class="t" style="left:3432.9px;top:1457.1px;font-size:18.5px;line-height:18.5px;font-weight:normal;color:#1e1e1e;letter-spacing:-0.079px;">Card Not Present (CNP)</div>
<div class="t" style="left:50.5px;top:1522.8px;font-size:18.5px;line-height:18.5px;font-weight:normal;color:#1e1e1e;">4</div>
<div class="t" style="left:119.1px;top:1522.8px;font-size:18.5px;line-height:18.5px;font-weight:normal;color:#0b3a75;letter-spacing:-0.344px;text-decoration:underline;text-underline-offset:2px">2023-03-03 09:57 AM EST</div>
<div class="t" style="left:355.8px;top:1522.8px;font-size:18.5px;line-height:18.5px;font-weight:normal;color:#1e1e1e;letter-spacing:0.139px;">John Smith</div>
<div class="t" style="left:808px;top:1522.8px;font-size:18.5px;line-height:18.5px;font-weight:normal;color:#1e1e1e;letter-spacing:0.527px;">Airline Tickets</div>
<div class="t" style="left:1246.4px;top:1522.8px;font-size:18.5px;line-height:18.5px;font-weight:normal;color:#1e1e1e;letter-spacing:-1.224px;">VISA</div>
<div class="t" style="left:1415px;top:1522.8px;font-size:18.5px;line-height:18.5px;font-weight:normal;color:#1e1e1e;letter-spacing:0.139px;">John Smith</div>
<div class="t" style="left:1629px;top:1522.8px;font-size:18.5px;line-height:18.5px;font-weight:normal;color:#1e1e1e;letter-spacing:0.519px;">41111111xxxx1111</div>
<div class="a" style="left:1820px;top:1510.1px;width:125px;height:44px;background:#eb5a0c;border-radius:10px"></div>
<svg class="a" style="left:1830px;top:1517.1px" width="30" height="30" viewBox="0 0 30 30"><path d="M6.6 6.6 V21.1 L19.4 13.85 Z" fill="#fff" stroke="#fff" stroke-width="2.4" stroke-linejoin="round"/></svg>
<div class="t" style="left:1854.8px;top:1523.1px;font-size:18.3px;line-height:18.3px;font-weight:normal;color:#fff;letter-spacing:0.838px;-webkit-text-stroke:0.5px #fff;">Action</div>
<svg class="a" style="left:1918.9px;top:1529.1px" width="10" height="5.2" viewBox="0 0 10 5.2"><path d="M0 0 H10 L5 5.2 Z" fill="#fff"/></svg>
<div class="t" style="right:1711.3px;top:1522.8px;font-size:18.5px;line-height:18.5px;font-weight:normal;color:#1e1e1e;letter-spacing:-0.079px;">100.00</div>
<div class="t" style="left:2057.5px;top:1522.8px;font-size:18.5px;line-height:18.5px;font-weight:normal;color:#1e1e1e;letter-spacing:-1.531px;">USD</div>
<div class="t" style="left:2160px;top:1522.8px;font-size:18.5px;line-height:18.5px;font-weight:normal;color:#1e1e1e;letter-spacing:-0.405px;">1000000000002</div>
<div class="t" style="left:2310.3px;top:1522.8px;font-size:18.5px;line-height:18.5px;font-weight:normal;color:#1e1e1e;letter-spacing:0.360px;">Pre-Authorization</div>
<div class="t" style="left:2480.2px;top:1522.8px;font-size:18.5px;line-height:18.5px;font-weight:normal;color:#0a8a0a;letter-spacing:-0.337px;-webkit-text-stroke:0.5px #0a8a0a;">Success</div>
<div class="t" style="left:2662.5px;top:1522.8px;font-size:18.5px;line-height:18.5px;font-weight:normal;color:#1e1e1e;letter-spacing:0.391px;">madmin.plugnpay</div>
<div class="t" style="left:2875.5px;top:1522.8px;font-size:18.5px;line-height:18.5px;font-weight:normal;color:#1e1e1e;letter-spacing:0.391px;">madmin.plugnpay</div>
<div class="t" style="left:3061.8px;top:1522.8px;font-size:18.5px;line-height:18.5px;font-weight:normal;color:#1e1e1e;letter-spacing:-0.378px;">2023030314570747101</div>
<div class="t" style="left:3432.9px;top:1522.8px;font-size:18.5px;line-height:18.5px;font-weight:normal;color:#1e1e1e;letter-spacing:-0.079px;">Card Not Present (CNP)</div>
<div class="a" style="left:39px;top:1578px;width:3679px;height:24.5px;background:#f1f1f1"></div>
<div class="a" style="left:64.2px;top:1580px;width:2749.1px;height:20.7px;background:#c1c1c1"></div>
<svg class="a" style="left:47.8px;top:1584.8px" width="6.4" height="11.2" viewBox="0 0 6.4 11.2"><path d="M6.4 0 V11.2 L0 5.6 Z" fill="#a3a3a3"/></svg>
<svg class="a" style="left:3703px;top:1584.8px" width="6.4" height="11.2" viewBox="0 0 6.4 11.2"><path d="M0 0 V11.2 L6.4 5.6 Z" fill="#505050"/></svg>
<div class="a" style="left:39px;top:1602.5px;width:3679px;height:1.3px;background:#073672"></div>
<div class="t" style="left:52px;top:1622px;font-size:18.5px;line-height:18.5px;font-weight:normal;color:#0a3670;letter-spacing:0.748px;-webkit-text-stroke:0.5px #0a3670;">Showing 1 to 4 of 4 entries</div>
<div class="t" style="left:3504.2px;top:1620.2px;font-size:18px;line-height:18px;font-weight:normal;color:#0a3670;letter-spacing:1.024px;-webkit-text-stroke:0.5px #0a3670;">Previous</div>
<div class="a" style="left:3600.1px;top:1609.2px;width:40.9px;height:38.8px;background:#eb5a0c;border-radius:3px"></div>
<div class="t" style="left:3614.5px;top:1620.2px;font-size:18px;line-height:18px;font-weight:normal;color:#fff;-webkit-text-stroke:0.5px #fff;">1</div>
<div class="t" style="left:3659px;top:1620.2px;font-size:18px;line-height:18px;font-weight:normal;color:#0a3670;letter-spacing:1.728px;-webkit-text-stroke:0.5px #0a3670;">Next</div>
<div class="a" style="left:39.3px;top:1703px;width:155.4px;height:53.5px;background:#eb5a0c;border-radius:11px"></div>
<svg class="a" style="left:60px;top:1712px" width="30" height="30" viewBox="0 0 30 30"><path d="M6.1 20 H23.9 V24.9 H6.1 Z" fill="#fff"/><circle cx="21.4" cy="22.5" r="0.85" fill="#eb5a0c"/><path d="M11 6.1 H22.5 V16.9 L18.3 13.6 L15.3 16.6 L11.9 12.6 L14.2 9.8 Z" fill="#fff"/><path d="M9.8 15.4 Q9.6 14.6 10.4 14.1 Q11.3 13.7 11.9 14.4 L15.2 17.8 H11.8 Z" fill="#fff"/></svg>
<div class="t" style="left:91.5px;top:1721px;font-size:18.3px;line-height:18.3px;font-weight:normal;color:#fff;letter-spacing:0.551px;-webkit-text-stroke:0.5px #fff;">Export</div>
<svg class="a" style="left:156.8px;top:1726px" width="5.6" height="10" viewBox="0 0 5.6 10"><path d="M0 0 L5.6 5 L0 10 Z" fill="#fff"/></svg>
<div class="a" style="left:200.9px;top:1703px;width:155.9px;height:53.5px;background:#007f00;border-radius:11px"></div>
<div class="a" style="left:310.6px;top:1703px;width:1.2px;height:53.5px;background:#cfe6cf"></div>
<div class="t" style="left:228.8px;top:1721px;font-size:18px;line-height:18px;font-weight:normal;color:#fff;letter-spacing:0.451px;-webkit-text-stroke:0.5px #fff;">Upload</div>
<svg class="a" style="left:318px;top:1713px" width="30" height="30" viewBox="0 0 30 30"><circle cx="15.5" cy="15.6" r="9.5" fill="#fff"/><rect x="13.8" y="8.9" width="3.1" height="2.9" fill="#007f00"/><path d="M11.9 14 H16.9 V19 H19 V20 H11.9 V19 H13.8 V15 H11.9 Z" fill="#007f00"/></svg>
<svg class="a" style="left:0px;top:1804px" width="34" height="44" viewBox="0 0 34 44"><path d="M-6 15 C-6 5 4 1 13 1 C20 1 24 5 25 8 C18 6 8 7 4 11 C1 14 4 17 8 20 C12 23 13 27 11 29.5 C8 31 2 30 -2 27 C-5 24 -6 19 -6 15 Z" fill="#572b1c"/><path d="M9 12 C14 9 21 9 25.5 10.5 C26.5 14 26 20 23 22.5 C18 20 12 16 9 12 Z" fill="#572b1c"/><text x="-4" y="42.6" font-family="Liberation Serif" font-weight="bold" font-size="17.2" letter-spacing="-0.3" fill="#6a3d2e">atum</text></svg>
<div class="t" style="left:48px;top:1806.6px;font-size:13.5px;line-height:13.5px;font-weight:normal;color:#222;letter-spacing:0px">Copyright &copy; 2023 VELA, All Rights Reserved. <u style="color:#0b3a75">Terms of Use</u> &middot; <u style="color:#0b3a75">Privacy Policy</u>. VELA and the VELA logo, the Sails of a Ship logo, Payment Matters, ONEui, the ONEui logo, DIVA, and the DIVA logo are registered trademarks of VELA, Intellectual Property in the United States of America and/or other</div>
<div class="t" style="left:48px;top:1826.2px;font-size:13.5px;line-height:13.5px;font-weight:normal;color:#222;">countries.</div>
<svg class="a" style="left:3560px;top:1785px" width="187" height="72" viewBox="0 0 187 72"><path d="M38.5 7.8 L40.2 10.5 L39.8 24.7 L26.1 60.3 C35 58.6 45 58.4 53.5 60.2 C40 60.3 24 64 13.2 70.8 Z" fill="#1a3e72"/><path d="M38.6 7.8 L71 58.3 C60 55.2 45 54.2 31.2 56.8 C38 53.2 47 51 55.4 50.3 L39.9 24.7 Z" fill="#ee5a24"/><text x="89.3" y="16.6" font-family="Liberation Sans" font-size="13" letter-spacing="1.45" fill="#1a3e72">POWERED BY</text><g transform="scale(0.072595)" fill="#1a3e72"><path d="M935 300 L1080 300 L1205 630 L1320 300 L1460 300 L1280 820 L1130 820 Z"/><path d="M1490 300 H1830 V400 H1612 V505 H1785 V600 H1612 V715 H1830 V820 H1490 Z"/><path d="M1860 300 H1982 V715 H2200 V820 H1860 Z"/><path d="M2230 820 L2445 300 L2600 300 L2600 480 L2540 480 L2455 615 L2600 615 L2600 710 L2410 710 L2372 820 Z"/></g></svg>
<div class="a" style="left:0px;top:1857px;width:3747px;height:2px;background:#aab3bc"></div>
<div class="a" style="left:0px;top:1859px;width:3747px;height:4px;background:#e2ecf6"></div>
<svg class="a" style="left:1719px;top:863px" width="27" height="40" viewBox="0 0 27 40"><path d="M1.2 1.2 V34.5 L8.6 27.4 L13.6 38.6 L19.2 36.2 L14.2 25.2 H24.6 Z" fill="#fff" stroke="#000" stroke-width="1.3" stroke-linejoin="miter"/></svg>
</body></html>
